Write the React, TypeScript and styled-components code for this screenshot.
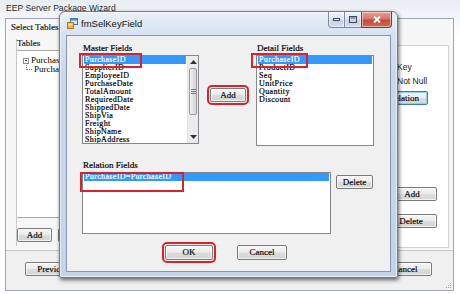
import React from 'react';
import styled, { createGlobalStyle } from 'styled-components';

const Global = createGlobalStyle`
  html, body { margin: 0; padding: 0; }
  body {
    width: 460px; height: 294px; overflow: hidden; background: #ffffff;
    font-family: "Liberation Serif", serif;
  }
  * { box-sizing: border-box; }
`;

const Screen = styled.div`
  position: relative;
  width: 460px;
  height: 294px;
  overflow: hidden;
  background: linear-gradient(#e8edf3 0, #f3f6f9 17px, #ffffff 40px);
`;

/* ---------- background wizard window ---------- */
const Wizard = styled.div`
  display: flex;
  flex-direction: column;
  width: 460px;
  height: 291px;
`;

const WizardTitle = styled.div`
  height: 18px;
  padding: 3px 0 0 6px;
  font: 8.6px/11px "Liberation Sans", sans-serif;
  color: #2b2b2b;
`;

const WizardFrame = styled.div`
  flex: 1;
  margin: 0 6px 0 5px;
  border: 1px solid #9ea8b4;
  background: #f0f0f0;
  display: flex;
  flex-direction: column;
`;

const TabPage = styled.div`
  height: 232px;
  background: #f7f7f7;
  border-bottom: 1px solid #c4c4c4;
  display: flex;
  flex-direction: column;
  padding: 4px 0 0 5px;
`;

const SmallText = styled.div`
  font: 9px/9px "Liberation Serif", serif;
  color: #111;
  white-space: nowrap;
  -webkit-text-stroke: 0.15px #111;
`;

const PageRow = styled.div`
  flex: 1;
  display: flex;
  margin-top: 7px;
`;

const TablesPane = styled.div`
  width: 185px;
  margin-left: 5px;
  display: flex;
  flex-direction: column;
  border-left: 1px solid #c9c9c9;
  margin-bottom: 4px;
`;

const Tree = styled.div`
  height: 168px;
  margin-top: 2px;
  background: #fff;
  border: 1px solid #a9a9a9;
  border-left: none;
  padding: 5px 0 0 6px;
  font: 9px/9px "Liberation Serif", serif;
`;

const TreeRow = styled.div<{ $indent: number }>`
  display: flex;
  align-items: center;
  gap: 2px;
  padding-left: ${(p) => p.$indent}px;
  height: 9px;
`;

const Expander = styled.span`
  width: 6px;
  height: 6px;
  border: 1px solid #8c8c8c;
  position: relative;
  &::after {
    content: '';
    position: absolute;
    left: 1px; top: 1.5px;
    width: 2px; height: 1px;
    background: #333;
  }
`;

const TreeLine = styled.span`
  width: 6px;
  height: 5px;
  border-left: 1px dotted #777;
  border-bottom: 1px dotted #777;
  margin-top: -4px;
`;

const ButtonRow = styled.div`
  display: flex;
  gap: 6px;
  margin-top: 10px;
`;

const WinButton = styled.button<{ $w: number; $h?: number; $mark?: number; $focus?: boolean }>`
  display: block;
  width: ${(p) => p.$w}px;
  height: ${(p) => p.$h ?? 14}px;
  padding: 0;
  font: 9px/9px "Liberation Serif", serif;
  -webkit-text-stroke: 0.15px #000;
  color: #000;
  background: linear-gradient(#f6f6f6 0%, #ececec 45%, #dcdcdc 55%, #d4d4d4 100%);
  border: 1px solid ${(p) => (p.$focus ? '#3c7fb1' : '#7a7a7a')};
  border-radius: 2px;
  box-shadow: inset 0 0 0 1px ${(p) => (p.$focus ? '#8fd0f2' : 'rgba(255,255,255,0.7)')};
  flex: none;
  ${(p) =>
    p.$mark !== undefined
      ? `outline: 2px solid #d8222c; outline-offset: ${p.$mark}px;`
      : ''}
`;

const RightGroup = styled.div`
  flex: 1;
  margin: 6px 4px 2px 15px;
  background: #fff;
  border: 1px solid #d2d2d2;
  display: flex;
  justify-content: flex-end;
  padding: 17px 11px 19px 0;
`;

const RightColumn = styled.div`
  width: 75px;
  display: flex;
  flex-direction: column;
  align-items: flex-end;
`;

const CheckRow = styled.div`
  align-self: stretch;
  display: flex;
  align-items: center;
  gap: 4px;
  height: 8px;
  margin-bottom: 6px;
  padding-left: 22px;
  font: 8.5px/8px "Liberation Sans", sans-serif;
  color: #222;
`;

const CheckBox = styled.span`
  width: 9px;
  height: 9px;
  border: 1px solid #8f8f8f;
  background: linear-gradient(#e6e6e6, #fff);
`;

const Spacer = styled.div`
  flex: 1;
`;

const StackGap = styled.div<{ $h: number }>`
  height: ${(p) => p.$h}px;
  flex: none;
`;

const RelationBtnWrap = styled.div`
  margin-right: 9px;
`;

const Footer = styled.div`
  flex: 1;
  display: flex;
  align-items: flex-start;
  gap: 10px;
  padding: 11px 21px 0 19px;
  position: relative;
`;

const FooterFill = styled.div`
  flex: 1;
`;

const Grip = styled.svg`
  position: absolute;
  right: 1px;
  bottom: 1px;
`;

/* ---------- dialog ---------- */
const Dialog = styled.div`
  position: absolute;
  left: 59px;
  top: 11px;
  width: 339px;
  height: 267px;
  display: flex;
  flex-direction: column;
  border: 1px solid #6a7b92;
  border-radius: 6px 6px 2px 2px;
  background: linear-gradient(#e9f0f8 0, #d6e3f2 22px, #c8d8eb 60px, #c3d4e9 100%);
  box-shadow: 1px 2px 4px rgba(0, 0, 0, 0.6), inset 0 0 0 1px rgba(255, 255, 255, 0.55);
`;

const TitleBar = styled.div`
  height: 23px;
  display: flex;
  align-items: flex-start;
  flex: none;
`;

const AppIcon = styled.svg`
  margin: 6px 0 0 7px;
  flex: none;
`;

const TitleText = styled.div`
  margin: 6px 0 0 3px;
  font: 9.5px/11px "Liberation Sans", sans-serif;
  color: #111;
`;

const Controls = styled.div`
  margin-left: auto;
  margin-right: 5px;
  display: flex;
`;

const CtlButton = styled.div<{ $w: number; $close?: boolean }>`
  width: ${(p) => p.$w}px;
  height: 16px;
  display: flex;
  align-items: center;
  justify-content: center;
  border: 1px solid ${(p) => (p.$close ? '#7a3a34' : '#788aa3')};
  border-top: none;
  margin-left: -1px;
  background: ${(p) =>
    p.$close
      ? 'linear-gradient(#e8a093 0%, #d67767 45%, #c44a38 55%, #cf6a52 100%)'
      : 'linear-gradient(#eef3f9 0%, #dbe5f1 45%, #c4d3e6 55%, #d2deed 100%)'};
  border-radius: ${(p) => (p.$close ? '0 0 4px 0' : '0')};
  &:first-child { border-radius: 0 0 0 4px; }
  box-shadow: inset 0 0 0 1px rgba(255, 255, 255, 0.5);
`;

const Client = styled.div`
  flex: 1;
  margin: 0 6px 5px 6px;
  position: relative;
  background: #f0f0f0;
  border: 1px solid #8597af;
  display: flex;
  flex-direction: column;
  padding: 8px 0 0 15px;
`;

const TopRow = styled.div`
  display: flex;
  align-items: flex-start;
`;

const FieldCol = styled.div<{ $w: number }>`
  width: ${(p) => p.$w}px;
  display: flex;
  flex-direction: column;
  flex: none;
`;

const Label = styled.div`
  font: 9px/9px "Liberation Serif", serif;
  color: #000;
  margin-bottom: 2px;
  padding-left: 1px;
  white-space: nowrap;
  -webkit-text-stroke: 0.2px #000;
`;

const ListBox = styled.div<{ $h: number }>`
  height: ${(p) => p.$h}px;
  background: #fff;
  border: 1px solid #828790;
  display: flex;
  overflow: hidden;
`;

const Items = styled.div`
  flex: 1;
  padding: 0 1px;
  overflow: hidden;
`;

const Item = styled.div<{ $sel?: boolean }>`
  height: 8px;
  font: 8px/8px "Liberation Serif", serif;
  letter-spacing: 0.35px;
  padding-left: 1px;
  white-space: nowrap;
  color: ${(p) => (p.$sel ? '#fff' : '#000')};
  background: ${(p) => (p.$sel ? '#3399ff' : 'transparent')};
  -webkit-text-stroke: 0.2px ${(p) => (p.$sel ? '#fff' : '#000')};
`;

const ScrollBar = styled.div`
  width: 11px;
  display: flex;
  flex-direction: column;
  background: #ececec;
  border-left: 1px solid #e4e4e4;
  padding: 1px 1px;
  gap: 1px;
`;

const Arrow = styled.div`
  height: 10px;
  display: flex;
  align-items: center;
  justify-content: center;
`;

const Track = styled.div`
  flex: 1;
  display: flex;
  flex-direction: column;
`;

const Thumb = styled.div`
  height: 47px;
  border: 1px solid #9a9a9a;
  border-radius: 2px;
  background: linear-gradient(90deg, #f3f3f3, #e2e2e2 50%, #d4d4d4);
  display: flex;
  align-items: center;
  justify-content: center;
`;

const AddCol = styled.div`
  display: flex;
  margin: 44px 10px 0 11px;
  flex: none;
`;

const RelationBlock = styled.div`
  margin-top: 15px;
  display: flex;
  flex-direction: column;
`;

const RelationRow = styled.div`
  display: flex;
  align-items: flex-start;
  gap: 5px;
`;

const RelationList = styled(ListBox)`
  width: 249px;
`;

const DeleteWrap = styled.div`
  display: flex;
  margin-top: 3px;
`;

const BottomRow = styled.div`
  display: flex;
  align-items: flex-start;
  gap: 24px;
  margin: 11px 0 0 83px;
`;

const Mark = styled.div<{ $x: number; $y: number; $w: number; $h: number }>`
  position: absolute;
  left: ${(p) => p.$x}px;
  top: ${(p) => p.$y}px;
  width: ${(p) => p.$w}px;
  height: ${(p) => p.$h}px;
  border: 2px solid #d8222c;
  pointer-events: none;
`;

const masterFields = [
  'PurchaseID', 'SupplierID', 'EmployeeID', 'PurchaseDate', 'TotalAmount',
  'RequiredDate', 'ShippedDate', 'ShipVia', 'Freight', 'ShipName', 'ShipAddress',
];
const detailFields = ['PurchaseID', 'ProductID', 'Seq', 'UnitPrice', 'Quantity', 'Discount'];

const UpArrow = () => (
  <svg width="7" height="4" viewBox="0 0 7 4"><path d="M0 4 L3.5 0 L7 4 Z" fill="#333" /></svg>
);
const DownArrow = () => (
  <svg width="7" height="4" viewBox="0 0 7 4"><path d="M0 0 L3.5 4 L7 0 Z" fill="#333" /></svg>
);

export default function App() {
  return (
    <Screen>
      <Global />
      <Wizard>
        <WizardTitle>EEP Server Package Wizard</WizardTitle>
        <WizardFrame>
          <TabPage>
            <SmallText>Select Tables</SmallText>
            <PageRow>
              <TablesPane>
                <SmallText>Tables</SmallText>
                <Tree>
                  <TreeRow $indent={0}>
                    <Expander />
                    <span>Purchase</span>
                  </TreeRow>
                  <TreeRow $indent={3}>
                    <TreeLine />
                    <span>PurchaseDetail</span>
                  </TreeRow>
                </Tree>
                <ButtonRow>
                  <WinButton $w={35}>Add</WinButton>
                  <WinButton $w={35}>Delete</WinButton>
                </ButtonRow>
              </TablesPane>
              <RightGroup>
                <RightColumn>
                  <CheckRow><CheckBox />Key</CheckRow>
                  <CheckRow><CheckBox />Not Null</CheckRow>
                  <RelationBtnWrap>
                    <WinButton $w={62} $focus>Set Relation</WinButton>
                  </RelationBtnWrap>
                  <Spacer />
                  <WinButton $w={50} $h={14}>Add</WinButton>
                  <StackGap $h={13} />
                  <WinButton $w={52} $h={14}>Delete</WinButton>
                </RightColumn>
              </RightGroup>
            </PageRow>
          </TabPage>
          <Footer>
            <WinButton $w={56}>Previous</WinButton>
            <FooterFill />
            <WinButton $w={52}>Next</WinButton>
            <WinButton $w={54}>Cancel</WinButton>
            <Grip width="6" height="6" viewBox="0 0 6 6">
              <rect x="4" y="0" width="1" height="1" fill="#a0a0a0" />
              <rect x="2" y="2" width="1" height="1" fill="#a0a0a0" />
              <rect x="4" y="2" width="1" height="1" fill="#a0a0a0" />
              <rect x="0" y="4" width="1" height="1" fill="#a0a0a0" />
              <rect x="2" y="4" width="1" height="1" fill="#a0a0a0" />
              <rect x="4" y="4" width="1" height="1" fill="#a0a0a0" />
            </Grip>
          </Footer>
        </WizardFrame>
      </Wizard>

      <Dialog>
        <TitleBar>
          <AppIcon width="11" height="11" viewBox="0 0 11 11">
            <rect x="3.5" y="0.5" width="7" height="6" fill="#dfeaf7" stroke="#3f6fa6" />
            <rect x="3.5" y="0.5" width="7" height="2" fill="#4f86c6" />
            <rect x="0.5" y="4.5" width="6" height="6" fill="#f2b33d" stroke="#b8741a" />
            <rect x="1.5" y="5.5" width="4" height="2" fill="#fbe08a" />
          </AppIcon>
          <TitleText>fmSelKeyField</TitleText>
          <Controls>
            <CtlButton $w={17}>
              <svg width="7" height="3" viewBox="0 0 7 3"><rect x="0.5" y="0.5" width="6" height="2" fill="#fff" stroke="#3b4a5e" /></svg>
            </CtlButton>
            <CtlButton $w={18}>
              <svg width="8" height="7" viewBox="0 0 8 7"><rect x="0.5" y="0.5" width="7" height="6" fill="none" stroke="#3b4a5e" /><rect x="1.5" y="1.5" width="5" height="1" fill="#3b4a5e" /></svg>
            </CtlButton>
            <CtlButton $w={31} $close>
              <svg width="8" height="7" viewBox="0 0 8 7"><path d="M1 0.5 L7 6.5 M7 0.5 L1 6.5" stroke="#fff" strokeWidth="2" /></svg>
            </CtlButton>
          </Controls>
        </TitleBar>
        <Client>
          <TopRow>
            <FieldCol $w={117}>
              <Label>Master Fields</Label>
              <ListBox $h={89}>
                <Items>
                  {masterFields.map((f, i) => (
                    <Item key={f} $sel={i === 0}>{f}</Item>
                  ))}
                </Items>
                <ScrollBar>
                  <Arrow><UpArrow /></Arrow>
                  <Track>
                    <Thumb>
                      <svg width="5" height="5" viewBox="0 0 5 5">
                        <rect x="0" y="0" width="5" height="1" fill="#777" />
                        <rect x="0" y="2" width="5" height="1" fill="#777" />
                        <rect x="0" y="4" width="5" height="1" fill="#777" />
                      </svg>
                    </Thumb>
                  </Track>
                  <Arrow><DownArrow /></Arrow>
                </ScrollBar>
              </ListBox>
            </FieldCol>
            <AddCol>
              <WinButton $w={36} $mark={1}>Add</WinButton>
            </AddCol>
            <FieldCol $w={118}>
              <Label>Detail Fields</Label>
              <ListBox $h={91}>
                <Items>
                  {detailFields.map((f, i) => (
                    <Item key={f} $sel={i === 0}>{f}</Item>
                  ))}
                </Items>
              </ListBox>
            </FieldCol>
          </TopRow>

          <RelationBlock>
            <Label>Relation Fields</Label>
            <RelationRow>
              <RelationList $h={62}>
                <Items>
                  <Item $sel>PurchaseID=PurchaseID</Item>
                </Items>
              </RelationList>
              <DeleteWrap>
                <WinButton $w={37}>Delete</WinButton>
              </DeleteWrap>
            </RelationRow>
          </RelationBlock>

          <BottomRow>
            <WinButton $w={48} $h={15} $mark={1}>OK</WinButton>
            <WinButton $w={50} $h={15}>Cancel</WinButton>
          </BottomRow>

          <Mark $x={12} $y={17} $w={63} $h={15} />
          <Mark $x={184} $y={17} $w={57} $h={15} />
          <Mark $x={13} $y={136} $w={104} $h={20} />
        </Client>
      </Dialog>
    </Screen>
  );
}
